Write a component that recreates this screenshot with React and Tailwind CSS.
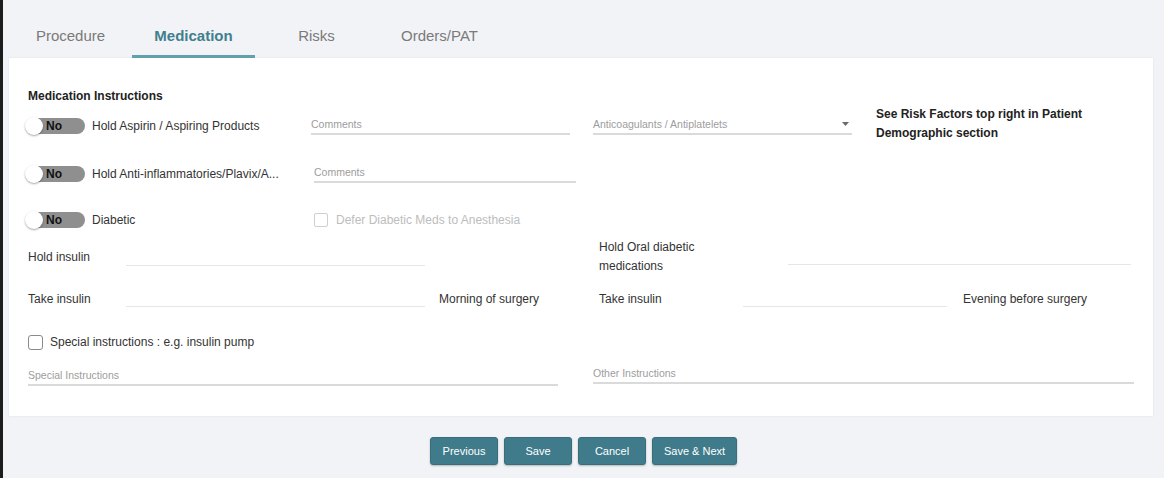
import React from "react";

const font = { fontFamily: '"Liberation Sans", Arial, sans-serif' };

function Toggle() {
  return (
    <div className="relative -ml-[3px] h-[18px] w-[60px] shrink-0">
      <div className="ml-[6px] mt-[1px] flex h-[16px] w-[54px] items-center rounded-full bg-[#8f8f8f] pl-[15px] text-[12px] font-bold leading-[16px] text-[#111]">
        No
      </div>
      <div className="absolute left-0 top-0 h-[18px] w-[18px] rounded-full bg-white shadow-[0_1px_2px_rgba(0,0,0,0.35)]" />
    </div>
  );
}

function Field({ className, text }) {
  return (
    <div className={className}>
      <div className="border-b-2 border-[#dadada] pb-[3px] text-[10.5px] leading-[12px] text-[#9d9d9d]">
        {text}
      </div>
    </div>
  );
}

function Tab({ label, active }) {
  return (
    <div
      className={
        active
          ? "flex h-[40px] w-[123px] items-center justify-center border-b-[3px] border-[#62a0ae] text-[15px] font-bold text-[#3f7f8f]"
          : "flex h-[40px] w-[123px] items-center justify-center border-b-[3px] border-transparent text-[15px] text-[#7a7a7a]"
      }
    >
      {label}
    </div>
  );
}

function Button({ label, className }) {
  return (
    <button
      className={
        "flex h-[28px] items-center justify-center rounded-[3px] border border-[#376f7c] bg-[#3f7b8a] text-[11px] text-white shadow-[0_1px_2px_rgba(0,0,0,0.25)] " +
        className
      }
    >
      {label}
    </button>
  );
}

export default function App() {
  return (
    <div
      style={font}
      className="min-h-[478px] w-full border-l-[3px] border-[#1c1c1c] bg-[#f2f3f6] text-[12px] text-[#333]"
    >
      {/* Tabs */}
      <div className="flex h-[58px] items-end pl-[6px]">
        <Tab label="Procedure" />
        <Tab label="Medication" active />
        <Tab label="Risks" />
        <Tab label="Orders/PAT" />
      </div>

      {/* Card */}
      <div className="ml-[6px] mr-[11px] bg-white pb-[27px] pl-[19px] pt-[31px] shadow-[0_0_2px_rgba(0,0,0,0.08)]">
        <div className="h-[14px] text-[12px] font-bold leading-[14px] text-[#222]">
          Medication Instructions
        </div>

        {/* Row 1 */}
        <div className="flex h-[46px] items-center">
          <div className="flex w-[283px] items-center">
            <Toggle />
            <span className="ml-[7px]">Hold Aspirin / Aspiring Products</span>
          </div>
          <Field className="w-[259px]" text="Comments" />
          <div className="ml-[23px] w-[259px]">
            <div className="flex items-center justify-between border-b-2 border-[#dadada] pb-[3px] pr-[3px] text-[10.5px] leading-[12px] text-[#9d9d9d]">
              <span>Anticoagulants / Antiplatelets</span>
              <svg width="7" height="4" viewBox="0 0 7 4">
                <path d="M0 0 L7 0 L3.5 4 Z" fill="#6b6b6b" />
              </svg>
            </div>
          </div>
          <div className="ml-[24px] mt-[2px] w-[240px] self-start text-[12px] font-bold leading-[19px] text-[#222]">
            See Risk Factors top right in Patient Demographic section
          </div>
        </div>

        {/* Row 2 */}
        <div className="flex h-[50px] items-center">
          <div className="flex w-[286px] items-center">
            <Toggle />
            <span className="ml-[7px]">Hold Anti-inflammatories/Plavix/A...</span>
          </div>
          <Field className="w-[262px]" text="Comments" />
        </div>

        {/* Row 3 */}
        <div className="flex h-[42px] items-center">
          <div className="flex w-[286px] items-center">
            <Toggle />
            <span className="ml-[7px]">Diabetic</span>
          </div>
          <div className="h-[14px] w-[14px] rounded-[2px] border border-[#cfcfcf]" />
          <span className="ml-[8px] text-[#bdbdbd]">Defer Diabetic Meds to Anesthesia</span>
        </div>

        {/* Row 4 */}
        <div className="flex h-[32px] items-center">
          <span className="w-[98px] shrink-0">Hold insulin</span>
          <div className="h-[17px] w-[299px] border-b border-[#e6e6e6]" />
          <div className="ml-[174px] w-[110px] leading-[19px]">Hold Oral diabetic medications</div>
          <div className="ml-[79px] h-[15px] w-[343px] border-b border-[#e6e6e6]" />
        </div>

        {/* Row 5 */}
        <div className="flex h-[52px] items-center">
          <span className="w-[98px] shrink-0">Take insulin</span>
          <div className="h-[15px] w-[299px] border-b border-[#e6e6e6]" />
          <span className="ml-[14px] w-[160px]">Morning of surgery</span>
          <span className="w-[144px]">Take insulin</span>
          <div className="h-[15px] w-[204px] border-b border-[#e6e6e6]" />
          <span className="ml-[16px]">Evening before surgery</span>
        </div>

        {/* Row 6 */}
        <div className="flex h-[34px] items-center">
          <div className="h-[15px] w-[15px] rounded-[3px] border-[1.5px] border-[#8a8a8a]" />
          <span className="ml-[7px]">Special instructions : e.g. insulin pump</span>
        </div>

        {/* Row 7 */}
        <div className="flex h-[30px] items-start">
          <Field className="mt-[10px] w-[530px]" text="Special Instructions" />
          <Field className="ml-[35px] mt-[8px] w-[541px]" text="Other Instructions" />
        </div>
      </div>

      {/* Buttons */}
      <div className="mt-[21px] flex justify-center gap-[6px]">
        <Button label="Previous" className="w-[68px]" />
        <Button label="Save" className="w-[68px]" />
        <Button label="Cancel" className="w-[68px]" />
        <Button label="Save & Next" className="w-[85px]" />
      </div>
    </div>
  );
}
